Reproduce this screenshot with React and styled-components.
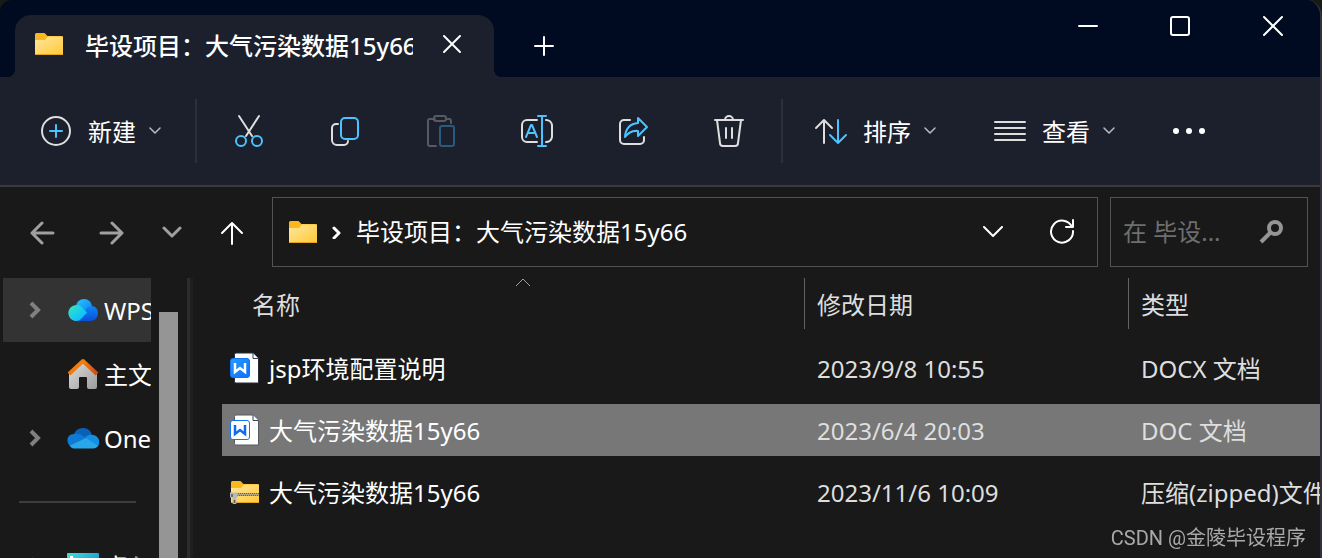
import React from "react";
import styled, { createGlobalStyle } from "styled-components";

const GlobalStyle = createGlobalStyle`
  * {
    box-sizing: border-box;
  }
  body {
    margin: 0;
    background: #191919;
    font-family: "Noto Sans", "Noto Sans CJK SC", sans-serif;
    font-size: 24px;
    line-height: 32px;
    color: #fff;
  }
  button, input {
    font: inherit;
    color: inherit;
    background: none;
    border: 0;
    padding: 0;
    margin: 0;
  }
  svg {
    flex: none;
  }
`;

const Window = styled.div`
  display: flex;
  flex-direction: column;
  height: 100vh;
  overflow: hidden;
  background: #191919;
  border-right: 2px solid #30313a;
  border-radius: 12px 16px 0 0;
`;

const TitleBar = styled.header`
  display: flex;
  align-items: stretch;
  flex: none;
  height: 77px;
  padding: 15px 0 0 15px;
  background: #000a20;
`;

const Tab = styled.div`
  position: relative;
  display: flex;
  align-items: center;
  width: 479px;
  padding: 0 32px 4px 19px;
  background: #1b202c;
  border-radius: 16px 16px 0 0;

  &::before,
  &::after {
    content: "";
    position: absolute;
    bottom: 0;
    width: 8px;
    height: 8px;
  }
  &::before {
    right: 100%;
    background: radial-gradient(circle at 0 0, #000a20 8px, #1b202c 8px);
  }
  &::after {
    left: 100%;
    background: radial-gradient(circle at 100% 0, #000a20 8px, #1b202c 8px);
  }
`;

const TabTitle = styled.span`
  flex: 1;
  margin: 0 29px 0 21px;
  padding-top: 4px;
  overflow: hidden;
  white-space: nowrap;
  font-weight: 500;
`;

const IconButton = styled.button`
  display: flex;
  align-items: center;
  justify-content: center;
  flex: none;
  width: ${(p) => p.$width}px;
`;

const WindowControls = styled.div`
  display: flex;
  align-items: flex-start;
  margin-left: auto;
`;

const ToolBar = styled.div`
  display: flex;
  align-items: center;
  flex: none;
  height: 110px;
  padding-left: 40px;
  background: #1b202c;
  border-bottom: 2px solid #3a3a3a;
`;

const ToolGroup = styled.div`
  display: flex;
  flex: none;
  margin: 0 4px;
`;

const MenuButton = styled.button`
  display: flex;
  align-items: center;
  flex: none;
  gap: 16px;
  margin-right: ${(p) => p.$after}px;

  svg:last-child {
    margin-left: -3px;
  }
`;

const Label = styled.span`
  padding-top: 2px;
  white-space: nowrap;
`;

const Divider = styled.div`
  flex: none;
  width: 2px;
  height: 64px;
  background: #2b303b;
`;

const NavBar = styled.div`
  display: flex;
  align-items: center;
  flex: none;
  height: 91px;
  padding: 0 12px 1px 12px;
`;

const Address = styled.div`
  display: flex;
  align-items: center;
  flex: 1;
  height: 70px;
  margin-right: 12px;
  padding-left: 15px;
  border: 1px solid #535353;
`;

const Crumb = styled.span`
  flex: 1;
  white-space: nowrap;
`;

const Search = styled.label`
  display: flex;
  align-items: center;
  width: 198px;
  height: 70px;
  padding: 0 22px 0 12px;
  border: 1px solid #535353;
`;

const SearchInput = styled.input`
  flex: 1;
  min-width: 0;
  &::placeholder {
    color: #6f6f6f;
    opacity: 1;
  }
`;

const Body = styled.div`
  display: flex;
  flex: 1;
  min-height: 0;
`;

const Side = styled.nav`
  flex: none;
  width: 151px;
  padding-left: 3px;
  overflow: hidden;
`;

const SideItem = styled.button`
  display: flex;
  align-items: center;
  width: 100%;
  height: 64px;
  padding-left: 24px;
  background: ${(p) => (p.$active ? "#333333" : "transparent")};
`;

const Arrow = styled.span`
  display: flex;
  flex: none;
  width: 40px;
`;

const SideLabel = styled(Label)`
  flex: none;
  margin-left: 5px;
`;

const SideRule = styled.hr`
  width: 117px;
  height: 2px;
  margin: 31px 0 31px 16px;
  border: 0;
  background: #3d3d3d;
`;

const ScrollTrack = styled.div`
  flex: none;
  width: 36px;
  padding: 34px 9px 0 8px;
`;

const ScrollThumb = styled.div`
  height: 100%;
  background: #959595;
`;

const Splitter = styled.div`
  flex: none;
  width: 6px;
  border-left: 3px solid #2c2c2c;
  background: #1f1f1f;
`;

const Files = styled.table`
  display: block;
  flex: 1;
  min-width: 0;
  padding-left: 29px;
  overflow: hidden;
`;

const FilesHead = styled.thead`
  display: block;
  margin-bottom: 13px;
`;

const FilesBody = styled.tbody`
  display: grid;
  gap: 10px;
`;

const Row = styled.tr`
  display: grid;
  grid-template-columns: 582fr 324fr 192fr;
  align-items: center;
  height: ${(p) => (p.$head ? 51 : 52)}px;
  background: ${(p) => (p.$selected ? "#777777" : "transparent")};
`;

const HeadCell = styled.th`
  position: relative;
  height: 51px;
  padding: 11px 0 0 ${(p) => (p.$first ? 30 : 12)}px;
  border-left: ${(p) => (p.$first ? "0" : "1px solid #636363")};
  text-align: left;
  font-weight: 400;
  color: #dedede;
`;

const SortMark = styled.svg`
  position: absolute;
  top: 0;
  left: calc(50% + 2px);
`;

const NameCell = styled.td`
  display: flex;
  align-items: center;
  gap: 9px;
  padding: 0 0 0 8px;
`;

const Cell = styled.td`
  min-width: 0;
  padding: 2px 0 0 13px;
  overflow: hidden;
  white-space: nowrap;
  color: #dedede;
`;

const Watermark = styled.div`
  position: fixed;
  right: 16px;
  bottom: 4px;
  font-family: Roboto, "Noto Sans CJK SC", sans-serif;
  font-size: 20px;
  color: #a9a9a9;
`;

const BLUE = "#4cc2ff";

function Icon({ w = 36, h = 36, color = "#dedede", sw = 2, children }) {
  return (
    <svg width={w} height={h} viewBox={`0 0 ${w} ${h}`} fill="none" stroke={color}
      strokeWidth={sw} strokeLinecap="round" strokeLinejoin="round" aria-hidden="true">
      {children}
    </svg>
  );
}

const ChevronDown = () => (
  <Icon w={12} h={8} color="#b9bbc0" sw={1.5}><path d="M1 1l5 5 5-5" /></Icon>
);

const ChevronRight = () => (
  <Icon w={14} h={20} color="#808080" sw={4}><path d="M4 3l7 7-7 7" strokeLinecap="butt" strokeLinejoin="miter" /></Icon>
);

function Folder({ zip }) {
  const id = zip ? "zip" : "folder";
  return (
    <svg width="30" height="24" viewBox="0 0 30 24" aria-hidden="true">
      <defs>
        <linearGradient id={id} x1="0" y1="0" x2="1" y2="1">
          <stop offset="0" stopColor="#ffe7a0" />
          <stop offset="1" stopColor="#ffc938" />
        </linearGradient>
      </defs>
      <path d="M1 2.500a1.500 1.500 0 0 1 1.500-1.500h8l3 3H27.500a1.500 1.500 0 0 1 1.500 1.500V22H1z" fill="#fbb81c" />
      <path d="M1 8h10l3-3.500h15V21.500a1 1 0 0 1-1 1H2a1 1 0 0 1-1-1z" fill={`url(#${id})`} />
      <path d="M1 22.500h28" stroke="#e3a51c" />
      {zip && (
        <g>
          <path d="M6 14.500h23" stroke="#6f6140" strokeWidth="3" />
          <path d="M7 14h22" stroke="#f2ead0" strokeDasharray="1 1" />
          <path d="M8 15h21" stroke="#f2ead0" strokeDasharray="1 1" />
          <path d="M0 12.500h7.500v5H6.500v5.500a1 1 0 0 1-1 1h-2a1 1 0 0 1-1-1v-5.500H0z" fill="#b9b9b9" />
          <path d="M2 14v3M4.500 20v3" stroke="#5b5b5b" strokeWidth="1.500" />
        </g>
      )}
    </svg>
  );
}

function DocIcon({ outlined }) {
  return (
    <svg width="30" height="32" viewBox="0 0 30 32" aria-hidden="true">
      <defs>
        <linearGradient id="doc" x1="0" y1="0" x2="1" y2="1"><stop offset="0" stopColor="#2b9bff" /><stop offset="1" stopColor="#0a70fa" /></linearGradient>
      </defs>
      <path d="M6 1h17l5.500 5.500V31H6a1.500 1.500 0 0 1-1.500-1.500V2.500A1.500 1.500 0 0 1 6 1z" fill="#fff" stroke={outlined ? "#555a66" : "#2a2d38"} />
      <path d="M23 1v5.500h5.500" fill="#fff" stroke="#3a3f52" />
      <rect x="0.500" y="6.500" width="19" height="19" rx="2.500" fill={outlined ? "#fff" : "url(#doc)"} stroke="#1374f5" />
      <path d="M5 11v9l5-4 5 4v-9" fill="none" stroke={outlined ? "#1268f3" : "#fff"} strokeWidth="2.500" />
    </svg>
  );
}

const WpsCloud = () => (
  <svg width="32" height="24" viewBox="0 0 32 24" aria-hidden="true">
    <defs>
      <linearGradient id="wa" x1="0" y1="0" x2="1" y2="1"><stop offset="0" stopColor="#3fe6b4" /><stop offset="0.600" stopColor="#14c8f5" /><stop offset="1" stopColor="#11b4ff" /></linearGradient>
      <linearGradient id="wb" x1="0" y1="0" x2="1" y2="1"><stop offset="0" stopColor="#2cc4ff" /><stop offset="1" stopColor="#0a7bf5" /></linearGradient>
      <linearGradient id="wc" x1="0" y1="0" x2="0" y2="1"><stop offset="0" stopColor="#0f86f5" /><stop offset="1" stopColor="#0850d8" /></linearGradient>
    </defs>
    <circle cx="17" cy="9" r="8" fill="url(#wb)" />
    <path d="M10 23L20 10c3-4 11-2 11 5 0 5-3 8-8 8z" fill="url(#wc)" />
    <path d="M9 23a8 8 0 1 1 5-14.500l6 6-6 6.500q-2 2-5 2z" fill="url(#wa)" />
  </svg>
);

const HomeIcon = () => (
  <svg width="32" height="32" viewBox="0 0 32 32" aria-hidden="true">
    <defs>
      <linearGradient id="hw" x1="0" y1="0" x2="1" y2="1"><stop offset="0" stopColor="#dedede" /><stop offset="1" stopColor="#9c9c9c" /></linearGradient>
      <linearGradient id="hr" x1="0" y1="0" x2="1" y2="0"><stop offset="0" stopColor="#f07a0c" /><stop offset="0.500" stopColor="#f08010" /><stop offset="1" stopColor="#d04a12" /></linearGradient>
    </defs>
    <path d="M2 15L16 3l14 12v14a2 2 0 0 1-2 2h-6a2 2 0 0 1-2-2V20a1 1 0 0 0-1-1h-6a1 1 0 0 0-1 1v9a2 2 0 0 1-2 2H4a2 2 0 0 1-2-2z" fill="url(#hw)" />
    <path d="M2 16L16 3l14 13" fill="none" stroke="url(#hr)" strokeWidth="4" strokeLinejoin="round" />
  </svg>
);

const OneDrive = () => (
  <svg width="32" height="22" viewBox="0 0 32 22" aria-hidden="true">
    <path d="M7 7a9.500 9.500 0 0 1 18 1l-5 5z" fill="#0a62b8" />
    <path d="M7 7q7-1 13 5L4 20C-2 15 0 7 7 7z" fill="#0f7ad6" />
    <path d="M18 11q3-4 8-3c7 1 8 9 4 12z" fill="#1590e0" />
    <path d="M3 18.500L19 11l12 8q-2 2.500-5 2.500H7q-3 0-4-3z" fill="#28a8ea" />
  </svg>
);

const DesktopIcon = () => (
  <svg width="32" height="26" viewBox="0 0 32 26" aria-hidden="true">
    <defs>
      <linearGradient id="dk" x1="0" y1="0" x2="1" y2="1"><stop offset="0" stopColor="#3fe0dc" /><stop offset="1" stopColor="#0d74c8" /></linearGradient>
    </defs>
    <rect width="32" height="26" rx="1" fill="url(#dk)" />
    <path d="M3 4h3M3 8h3" stroke="#fff" strokeWidth="2" />
  </svg>
);

const sideItems = [
  { label: "WPS云盘", icon: <WpsCloud />, arrow: true, active: true },
  { label: "主文件夹", icon: <HomeIcon /> },
  { label: "OneDrive", icon: <OneDrive />, arrow: true },
];

const files = [
  { name: "jsp环境配置说明", date: "2023/9/8 10:55", type: "DOCX 文档", icon: <DocIcon /> },
  { name: "大气污染数据15y66", date: "2023/6/4 20:03", type: "DOC 文档", icon: <DocIcon outlined />, selected: true },
  { name: "大气污染数据15y66", date: "2023/11/6 10:09", type: "压缩(zipped)文件夹", icon: <Folder zip /> },
];

function Commands() {
  return (
    <ToolBar>
      <MenuButton $after={34}>
        <Icon w={32} h={32}><circle cx="16" cy="16" r="14" /><path d="M16 10v12M10 16h12" stroke={BLUE} /></Icon>
        <Label>新建</Label>
        <ChevronDown />
      </MenuButton>
      <Divider />
      <ToolGroup>
        <IconButton $width={96} aria-label="剪切">
          <Icon>
            <path d="M8 3l13 20M28 3L15 23" />
            <circle cx="10" cy="28" r="5" stroke={BLUE} />
            <circle cx="26" cy="28" r="5" stroke={BLUE} />
          </Icon>
        </IconButton>
        <IconButton $width={96} aria-label="复制">
          <Icon>
            <path d="M11 11H9a4 4 0 0 0-4 4v12a5 5 0 0 0 5 5h7a4 4 0 0 0 4-4" />
            <rect x="14" y="5" width="17" height="21" rx="4" stroke={BLUE} />
          </Icon>
        </IconButton>
        <IconButton $width={96} aria-label="粘贴" disabled>
          <Icon color="#555a63">
            <path d="M12 6H7a2 2 0 0 0-2 2v23a2 2 0 0 0 2 2h6M23 6h3a2 2 0 0 1 2 2v2" />
            <rect x="11" y="3" width="12" height="5" rx="2" />
            <rect x="17" y="13" width="14" height="20" rx="2" stroke="#2b5b7c" />
          </Icon>
        </IconButton>
        <IconButton $width={96} aria-label="重命名">
          <Icon>
            <path d="M18 7H8a5 5 0 0 0-5 5v12a5 5 0 0 0 5 5h10M27 7a6 6 0 0 1 6 5v12a6 6 0 0 1-6 5" />
            <path d="M7 24l5-12h1l5 12M9 20h7M23 3v30M19 3h8M19 33h8" stroke={BLUE} />
          </Icon>
        </IconButton>
        <IconButton $width={96} aria-label="共享">
          <Icon>
            <path d="M15 7H9a4 4 0 0 0-4 4v16a4 4 0 0 0 4 4h16a4 4 0 0 0 4-4v-3" />
            <path d="M23 5l9 9-9 9v-5q-8-1-13 6 1-13 13-14z" stroke={BLUE} />
          </Icon>
        </IconButton>
        <IconButton $width={96} aria-label="删除">
          <Icon>
            <path d="M4 7h28M6 7l3 23a3 3 0 0 0 3 3h12a3 3 0 0 0 3-3l3-23M14 7a4 4 0 0 1 8 0M15 15v10M21 15v10" />
          </Icon>
        </IconButton>
      </ToolGroup>
      <Divider />
      <MenuButton $after={58}>
        <Icon w={64} h={36}>
          <path d="M41 30V7M33 15l8-8 8 8" />
          <path d="M55 7v23M47 22l8 8 8-8" stroke={BLUE} />
        </Icon>
        <Label>排序</Label>
        <ChevronDown />
      </MenuButton>
      <MenuButton $after={58}>
        <Icon w={32} h={32}><path d="M1 7h30M1 13h30M1 19h30M1 25h30" /></Icon>
        <Label>查看</Label>
        <ChevronDown />
      </MenuButton>
      <IconButton $width={32} aria-label="更多">
        <Icon w={32} h={8} color="none">
          <g fill="#fff"><circle cx="3" cy="4" r="3" /><circle cx="16" cy="4" r="3" /><circle cx="29" cy="4" r="3" /></g>
        </Icon>
      </IconButton>
    </ToolBar>
  );
}

function App() {
  return (
    <Window>
      <GlobalStyle />
      <TitleBar>
        <Tab>
          <Folder />
          <TabTitle>毕设项目：大气污染数据15y66</TabTitle>
          <IconButton $width={20} aria-label="关闭标签页">
            <Icon w={20} h={20} color="#fff"><path d="M2 2l16 16M18 2L2 18" /></Icon>
          </IconButton>
        </Tab>
        <IconButton $width={100} aria-label="新建标签页">
          <Icon w={20} h={20} color="#fff"><path d="M10 1v18M1 10h18" /></Icon>
        </IconButton>
        <WindowControls>
          <IconButton $width={92} aria-label="最小化">
            <Icon w={22} h={22} color="#fff"><path d="M2 11h18" /></Icon>
          </IconButton>
          <IconButton $width={92} aria-label="最大化">
            <Icon w={22} h={22} color="#fff"><rect x="2" y="2" width="18" height="18" rx="2" /></Icon>
          </IconButton>
          <IconButton $width={94} aria-label="关闭">
            <Icon w={22} h={22} color="#fff"><path d="M2 2l18 18M20 2L2 20" /></Icon>
          </IconButton>
        </WindowControls>
      </TitleBar>

      <Commands />

      <NavBar>
        <IconButton $width={60} aria-label="后退">
          <Icon w={26} h={26} color="#a0a0a0" sw={3}><path d="M24 14H3M13 4L3 14l10 10" /></Icon>
        </IconButton>
        <IconButton $width={80} aria-label="前进">
          <Icon w={26} h={26} color="#a0a0a0" sw={3}><path d="M2 14h21M13 4l10 10-10 10" /></Icon>
        </IconButton>
        <IconButton $width={40} aria-label="最近位置">
          <Icon w={20} h={14} color="#a0a0a0" sw={3}><path d="M2 3l8 8 8-8" /></Icon>
        </IconButton>
        <IconButton $width={80} aria-label="向上">
          <Icon w={26} h={26} color="#fff"><path d="M13 25V4M3 14L13 4l10 10" /></Icon>
        </IconButton>
        <Address>
          <Folder />
          <IconButton $width={38} aria-label="展开">
            <Icon w={10} h={14} color="#fff" sw={3}><path d="M2 3l5 5-5 5" /></Icon>
          </IconButton>
          <Crumb>毕设项目：大气污染数据15y66</Crumb>
          <IconButton $width={68} aria-label="历史记录">
            <Icon w={20} h={12} color="#fff"><path d="M1 1l9 9 9-9" /></Icon>
          </IconButton>
          <IconButton $width={70} aria-label="刷新">
            <Icon w={26} h={26} color="#fff"><path d="M23 8a11 11 0 1 0 1 4M24 1v7h-7" /></Icon>
          </IconButton>
        </Address>
        <Search>
          <SearchInput aria-label="搜索" placeholder="在 毕设..." />
          <Icon w={26} h={26} color="#959595" sw={4}><circle cx="16" cy="9" r="6" /><path d="M11 14l-9 9" strokeLinecap="butt" /></Icon>
        </Search>
      </NavBar>

      <Body>
        <Side>
          {sideItems.map((item) => (
            <SideItem key={item.label} $active={item.active}>
              <Arrow>{item.arrow && <ChevronRight />}</Arrow>
              {item.icon}
              <SideLabel>{item.label}</SideLabel>
            </SideItem>
          ))}
          <SideRule />
          <SideItem>
            <Arrow><ChevronRight /></Arrow>
            <DesktopIcon />
            <SideLabel>桌</SideLabel>
            <Icon w={16} h={20} color="#8b8f96"><path d="M8 1l6 6-4 2-2 5-6-6 5-2z" fill="#8b8f96" /></Icon>
          </SideItem>
        </Side>
        <ScrollTrack><ScrollThumb /></ScrollTrack>
        <Splitter />
        <Files>
          <FilesHead>
            <Row $head>
              <HeadCell $first>
                名称
                <SortMark width="16" height="10" fill="none" stroke="#a0a0a0"><path d="M1 8l7-7 7 7" /></SortMark>
              </HeadCell>
              <HeadCell>修改日期</HeadCell>
              <HeadCell>类型</HeadCell>
            </Row>
          </FilesHead>
          <FilesBody>
            {files.map((file) => (
              <Row key={file.date} $selected={file.selected}>
                <NameCell>
                  {file.icon}
                  <Label>{file.name}</Label>
                </NameCell>
                <Cell>{file.date}</Cell>
                <Cell>{file.type}</Cell>
              </Row>
            ))}
          </FilesBody>
        </Files>
      </Body>
      <Watermark>CSDN @金陵毕设程序</Watermark>
    </Window>
  );
}

export default App;
